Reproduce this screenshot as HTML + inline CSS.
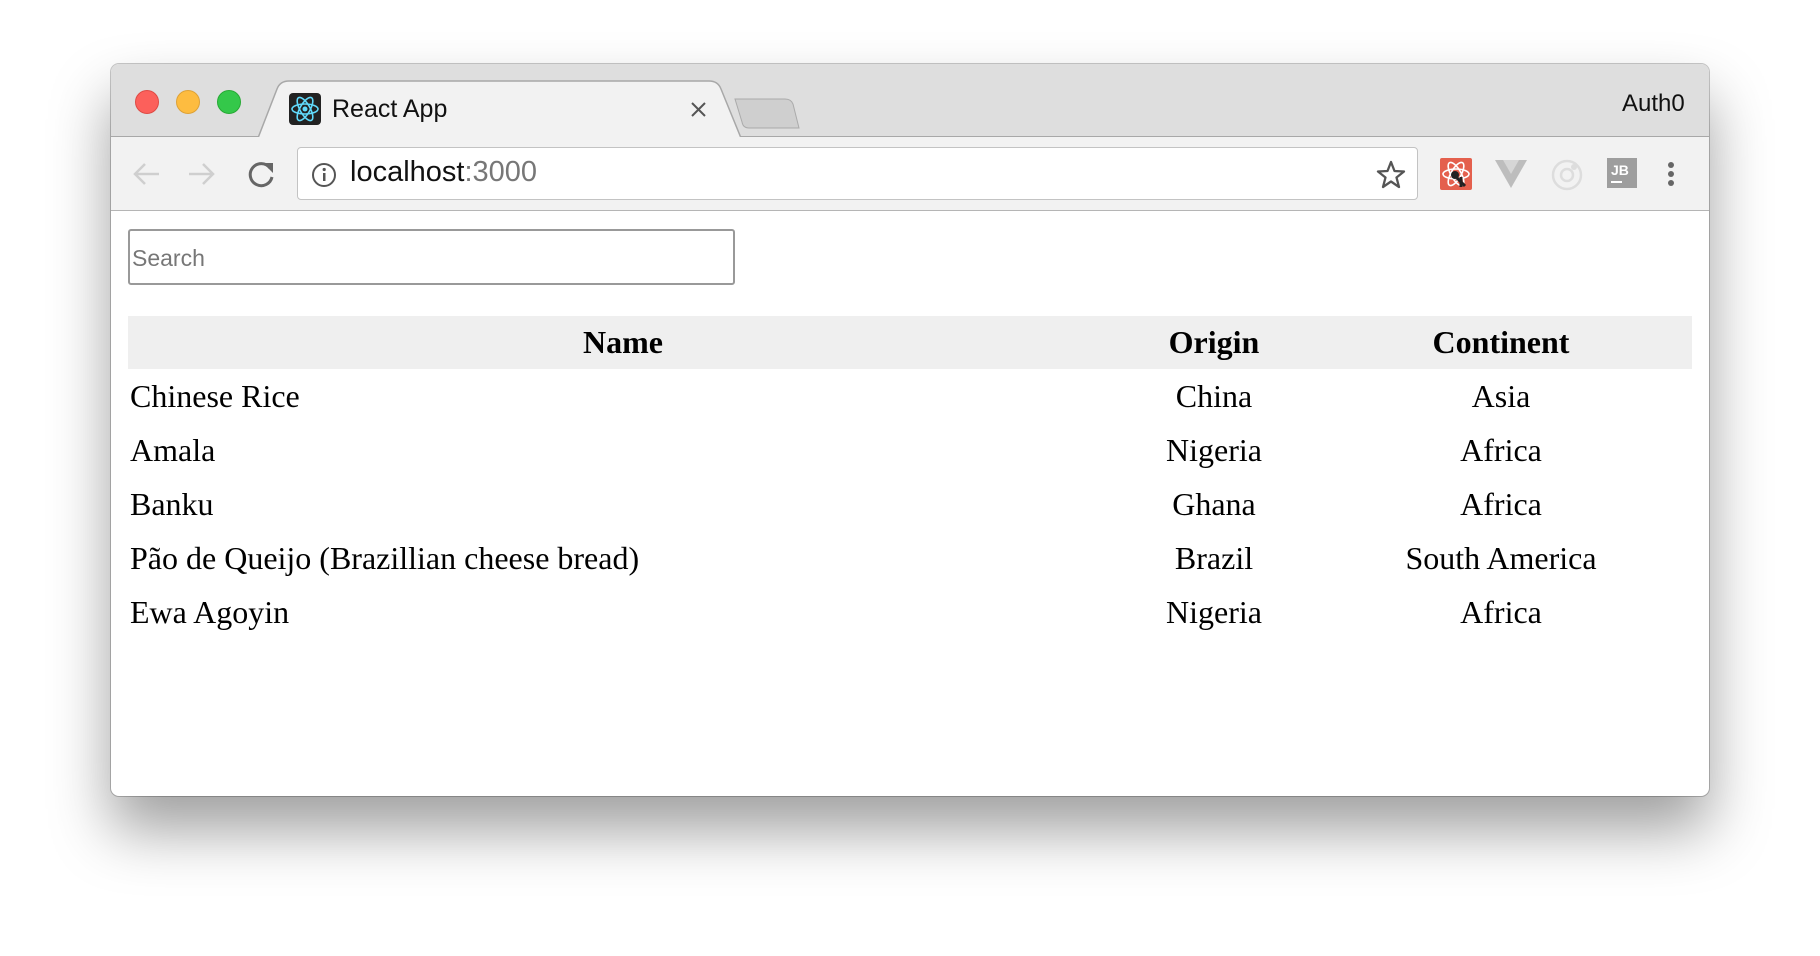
<!DOCTYPE html>
<html><head><meta charset="utf-8"><style>
*{box-sizing:border-box;margin:0;padding:0}
body{width:1820px;height:956px;background:#fff;position:relative;overflow:hidden;font-family:"Liberation Sans",sans-serif}
.win{position:absolute;left:111px;top:64px;width:1598px;height:732px;border-radius:8px;background:#fff;box-shadow:0 34px 60px rgba(0,0,0,.38),0 0 0 1px #c8c8c8;overflow:hidden}
.tabbar{position:absolute;left:0;top:0;width:100%;height:73px;background:#dedede;border-bottom:1px solid #a8a8a8}
.dot{position:absolute;top:26px;width:24px;height:24px;border-radius:50%}
.toolbar{position:absolute;left:0;top:73px;width:100%;height:74px;background:#f2f2f2;border-bottom:1px solid #b5b5b5}
.omni{position:absolute;left:186px;top:10px;width:1121px;height:53px;background:#fff;border:1px solid #c3c3c3;border-radius:4px}
.content{position:absolute;left:0;top:148px;width:100%}
table{position:absolute;left:17px;top:104px;width:1564px;border-collapse:collapse;font-family:"Liberation Serif",serif;font-size:32px}
th{background:#efefef;height:53px;font-weight:bold}
td{height:54px}
td:first-child{padding-left:2px}
td.c,th{text-align:center}
</style></head><body>
<div class="win">
 <div class="tabbar">
  <div class="dot" style="left:24px;background:#fc605b;border:1px solid #de4a44"></div>
  <div class="dot" style="left:65px;background:#fdbc40;border:1px solid #dea236"></div>
  <div class="dot" style="left:106px;background:#34c84a;border:1px solid #27aa35"></div>
  <svg style="position:absolute;left:0;top:0" width="1598" height="74">
   <path d="M147 74 L166 25 Q169 17 178 17 L598 17 Q607 17 610 25 L630 74 Z" fill="#f2f2f2" stroke="#a8a8a8" stroke-width="1.5"/>
   <path d="M624 35 L674 35 Q680 35 682 40 L688 64 L638 64 Q632 64 631 58 Z" fill="#cfcfcf" stroke="#aaa"/>
   <rect x="178" y="29" width="32" height="32" rx="4" fill="#222"/>
   <g fill="none" stroke="#61dafb" stroke-width="1.6" transform="translate(194 45)">
    <ellipse rx="13" ry="5"/><ellipse rx="13" ry="5" transform="rotate(60)"/><ellipse rx="13" ry="5" transform="rotate(120)"/>
   </g>
   <circle cx="194" cy="45" r="2.5" fill="#61dafb"/>
   <path d="M581 39 L594 52 M594 39 L581 52" stroke="#555" stroke-width="2"/>
  </svg>
  <div style="position:absolute;left:221px;top:31px;font-size:25px;color:#111">React App</div>
  <div style="position:absolute;left:1511px;top:26px;font-size:24px;color:#111">Auth0</div>
 </div>
 <div class="toolbar">
  <svg style="position:absolute;left:0;top:0" width="1598" height="74">
   <g stroke="#cfcfcf" stroke-width="2.5" fill="none"><path d="M24 37 H48 M34 27 L24 37 L34 47"/><path d="M78 37 H102 M92 27 L102 37 L92 47"/></g>
   <path d="M159 31 A11 11 0 1 0 161 40" stroke="#666" stroke-width="3" fill="none"/>
   <path d="M152 26 L162 26 L162 36 Z" fill="#666"/>
   <rect x="1329" y="21" width="32" height="32" rx="2" fill="#e4604d"/>
   <g fill="none" stroke="#fff" stroke-width="1.6" transform="translate(1345 37)"><ellipse rx="13" ry="5"/><ellipse rx="13" ry="5" transform="rotate(60)"/><ellipse rx="13" ry="5" transform="rotate(120)"/></g>
   <circle cx="1344" cy="38" r="4" fill="#222"/><path d="M1346 41 L1354 49 M1350 40 L1350 50" stroke="#222" stroke-width="3"/>
   <path d="M1384 23 L1416 23 L1400 51 Z" fill="#bdbdbd"/><path d="M1392 23 L1408 23 L1400 37 Z" fill="#d6d6d6"/>
   <circle cx="1456" cy="38" r="14" fill="none" stroke="#ddd" stroke-width="2.5"/><circle cx="1456" cy="38" r="6" fill="none" stroke="#ddd" stroke-width="2.5"/><circle cx="1463" cy="30" r="3" fill="#ddd"/>
   <rect x="1496" y="21" width="30" height="30" fill="#9e9e9e"/>
   <text x="1500" y="38" font-family="Liberation Sans" font-weight="bold" font-size="14" fill="#fff">JB</text>
   <rect x="1500" y="44" width="11" height="2" fill="#fff"/>
   <g fill="#666"><circle cx="1560" cy="28" r="3"/><circle cx="1560" cy="37" r="3"/><circle cx="1560" cy="46" r="3"/></g>
  </svg>
  <div class="omni">
   <svg style="position:absolute;left:13px;top:14px" width="26" height="26"><circle cx="13" cy="13" r="11" fill="none" stroke="#555" stroke-width="2"/><rect x="12" y="11" width="2.5" height="8" fill="#555"/><circle cx="13.2" cy="7.5" r="1.6" fill="#555"/></svg>
   <div style="position:absolute;left:52px;top:8px;font-size:29px;color:#111">localhost<span style="color:#777">:3000</span></div>
   <svg style="position:absolute;left:1078px;top:12px" width="30" height="30"><path d="M15 2 L18.5 11 L28 11.5 L20.5 17.5 L23 27 L15 21.5 L7 27 L9.5 17.5 L2 11.5 L11.5 11 Z" fill="none" stroke="#555" stroke-width="2.3" stroke-linejoin="round"/></svg>
  </div>
 </div>
 <div class="content">
  <div style="position:absolute;left:17px;top:17px;width:607px;height:56px;border:2px solid #999;border-radius:3px"></div>
  <div style="position:absolute;left:21px;top:33px;font-size:23px;color:#777">Search</div>
  <table>
   <tr><th style="width:990px">Name</th><th style="width:192px">Origin</th><th>Continent</th></tr>
   <tr><td>Chinese Rice</td><td class="c">China</td><td class="c">Asia</td></tr>
   <tr><td>Amala</td><td class="c">Nigeria</td><td class="c">Africa</td></tr>
   <tr><td>Banku</td><td class="c">Ghana</td><td class="c">Africa</td></tr>
   <tr><td>Pão de Queijo (Brazillian cheese bread)</td><td class="c">Brazil</td><td class="c">South America</td></tr>
   <tr><td>Ewa Agoyin</td><td class="c">Nigeria</td><td class="c">Africa</td></tr>
  </table>
 </div>
</div>
</body></html>
